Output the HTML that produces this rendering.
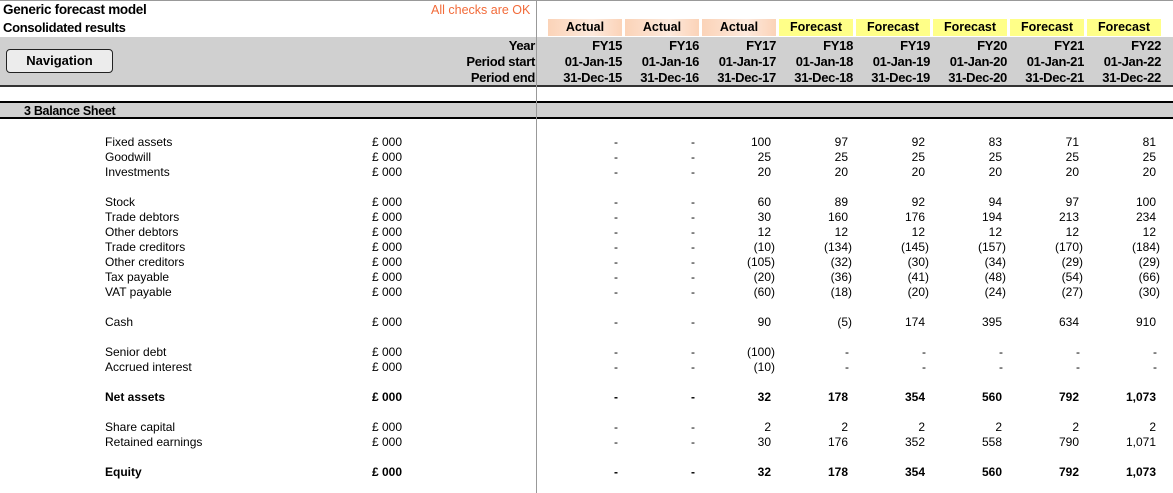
<!DOCTYPE html>
<html><head><meta charset="utf-8"><style>
*{margin:0;padding:0;box-sizing:border-box}
body{width:1173px;height:493px;background:#fff;position:relative;overflow:hidden;font-family:"Liberation Sans",Arial,sans-serif;font-size:12px;color:#000}
.a{position:absolute;white-space:nowrap}
.hd{font-weight:bold;font-size:13px;letter-spacing:-0.3px}
.r{position:absolute;left:0;width:1173px;height:15px;line-height:15px}
.r span{position:absolute;white-space:nowrap}
.c{text-align:right;width:77px}
.b{font-weight:bold}
.tag{position:absolute;top:19px;height:17px;width:74px;line-height:17px;text-align:center;font-weight:bold;font-size:12.5px}
.act{background:linear-gradient(90deg,#fbd3b8,#fde9dc 60%,#fbd3b8)}
.fc{background:#ffff88}
.hv{position:absolute;text-align:right;width:77px;font-weight:bold;font-size:13px;letter-spacing:-0.3px}
</style></head><body>
<div class="a" style="left:0;top:0;width:1173px;height:1px;background:#999"></div>
<div class="a hd" style="left:3px;top:2px;font-size:13.5px">Generic forecast model</div>
<div class="a" style="left:431px;top:3px;color:#f26b3a;font-size:12.5px">All checks are OK</div>
<div class="a hd" style="left:3px;top:20px">Consolidated results</div>
<div class="a" style="left:537px;top:18px;width:636px;height:19px;background:#fff"></div>
<div class="tag act" style="left:548px">Actual</div>
<div class="tag act" style="left:625px">Actual</div>
<div class="tag act" style="left:702px">Actual</div>
<div class="tag fc" style="left:779px">Forecast</div>
<div class="tag fc" style="left:856px">Forecast</div>
<div class="tag fc" style="left:933px">Forecast</div>
<div class="tag fc" style="left:1010px">Forecast</div>
<div class="tag fc" style="left:1087px">Forecast</div>
<div class="a" style="left:0;top:37px;width:1173px;height:48px;background:#d0d0d0"></div>
<div class="a" style="left:0;top:85px;width:1173px;height:2px;background:#333"></div>
<div class="a" style="left:6px;top:49px;width:107px;height:24px;border:1px solid #222;border-radius:4px;background:#ececec;font-weight:bold;font-size:13px;line-height:22px;text-align:center">Navigation</div>
<div class="a hd" style="left:436px;top:38px;width:99px;text-align:right">Year</div>
<div class="a hd" style="left:436px;top:54px;width:99px;text-align:right">Period start</div>
<div class="a hd" style="left:436px;top:70px;width:99px;text-align:right">Period end</div>
<div class="hv" style="left:545px;top:38px">FY15</div><div class="hv" style="left:545px;top:54px">01-Jan-15</div><div class="hv" style="left:545px;top:70px">31-Dec-15</div>
<div class="hv" style="left:622px;top:38px">FY16</div><div class="hv" style="left:622px;top:54px">01-Jan-16</div><div class="hv" style="left:622px;top:70px">31-Dec-16</div>
<div class="hv" style="left:699px;top:38px">FY17</div><div class="hv" style="left:699px;top:54px">01-Jan-17</div><div class="hv" style="left:699px;top:70px">31-Dec-17</div>
<div class="hv" style="left:776px;top:38px">FY18</div><div class="hv" style="left:776px;top:54px">01-Jan-18</div><div class="hv" style="left:776px;top:70px">31-Dec-18</div>
<div class="hv" style="left:853px;top:38px">FY19</div><div class="hv" style="left:853px;top:54px">01-Jan-19</div><div class="hv" style="left:853px;top:70px">31-Dec-19</div>
<div class="hv" style="left:930px;top:38px">FY20</div><div class="hv" style="left:930px;top:54px">01-Jan-20</div><div class="hv" style="left:930px;top:70px">31-Dec-20</div>
<div class="hv" style="left:1007px;top:38px">FY21</div><div class="hv" style="left:1007px;top:54px">01-Jan-21</div><div class="hv" style="left:1007px;top:70px">31-Dec-21</div>
<div class="hv" style="left:1084px;top:38px">FY22</div><div class="hv" style="left:1084px;top:54px">01-Jan-22</div><div class="hv" style="left:1084px;top:70px">31-Dec-22</div>
<div class="a" style="left:0;top:101px;width:1173px;height:2px;background:#000"></div>
<div class="a" style="left:0;top:103px;width:1173px;height:15px;background:#d0d0d0"></div>
<div class="a" style="left:0;top:117px;width:1173px;height:2px;background:#000"></div>
<div class="a hd" style="left:24px;top:103px;line-height:16px;font-size:12.5px">3 Balance Sheet</div>
<div class="a" style="left:536px;top:0;width:1px;height:493px;background:#999"></div>
<div id="rows"></div>
<script>
var rows=[
[135,"Fixed assets",0,["-","-","100","97","92","83","71","81"]],
[150,"Goodwill",0,["-","-","25","25","25","25","25","25"]],
[165,"Investments",0,["-","-","20","20","20","20","20","20"]],
[195,"Stock",0,["-","-","60","89","92","94","97","100"]],
[210,"Trade debtors",0,["-","-","30","160","176","194","213","234"]],
[225,"Other debtors",0,["-","-","12","12","12","12","12","12"]],
[240,"Trade creditors",0,["-","-","(10)","(134)","(145)","(157)","(170)","(184)"]],
[255,"Other creditors",0,["-","-","(105)","(32)","(30)","(34)","(29)","(29)"]],
[270,"Tax payable",0,["-","-","(20)","(36)","(41)","(48)","(54)","(66)"]],
[285,"VAT payable",0,["-","-","(60)","(18)","(20)","(24)","(27)","(30)"]],
[315,"Cash",0,["-","-","90","(5)","174","395","634","910"]],
[345,"Senior debt",0,["-","-","(100)","-","-","-","-","-"]],
[360,"Accrued interest",0,["-","-","(10)","-","-","-","-","-"]],
[390,"Net assets",1,["-","-","32","178","354","560","792","1,073"]],
[420,"Share capital",0,["-","-","2","2","2","2","2","2"]],
[435,"Retained earnings",0,["-","-","30","176","352","558","790","1,071"]],
[465,"Equity",1,["-","-","32","178","354","560","792","1,073"]]];
var h="";
rows.forEach(function(r){
h+='<div class="r'+(r[2]?' b':'')+'" style="top:'+r[0]+'px"><span style="left:105px">'+r[1]+'</span><span style="left:372px">£ 000</span>';
r[3].forEach(function(v,i){
var pr=v=="-"?3:(v.charAt(0)=="("?0:4);
h+='<span class="c" style="left:'+(544+77*i)+'px;padding-right:'+pr+'px">'+v+'</span>';});
h+='</div>';});
document.getElementById("rows").innerHTML=h;
</script>
</body></html>
